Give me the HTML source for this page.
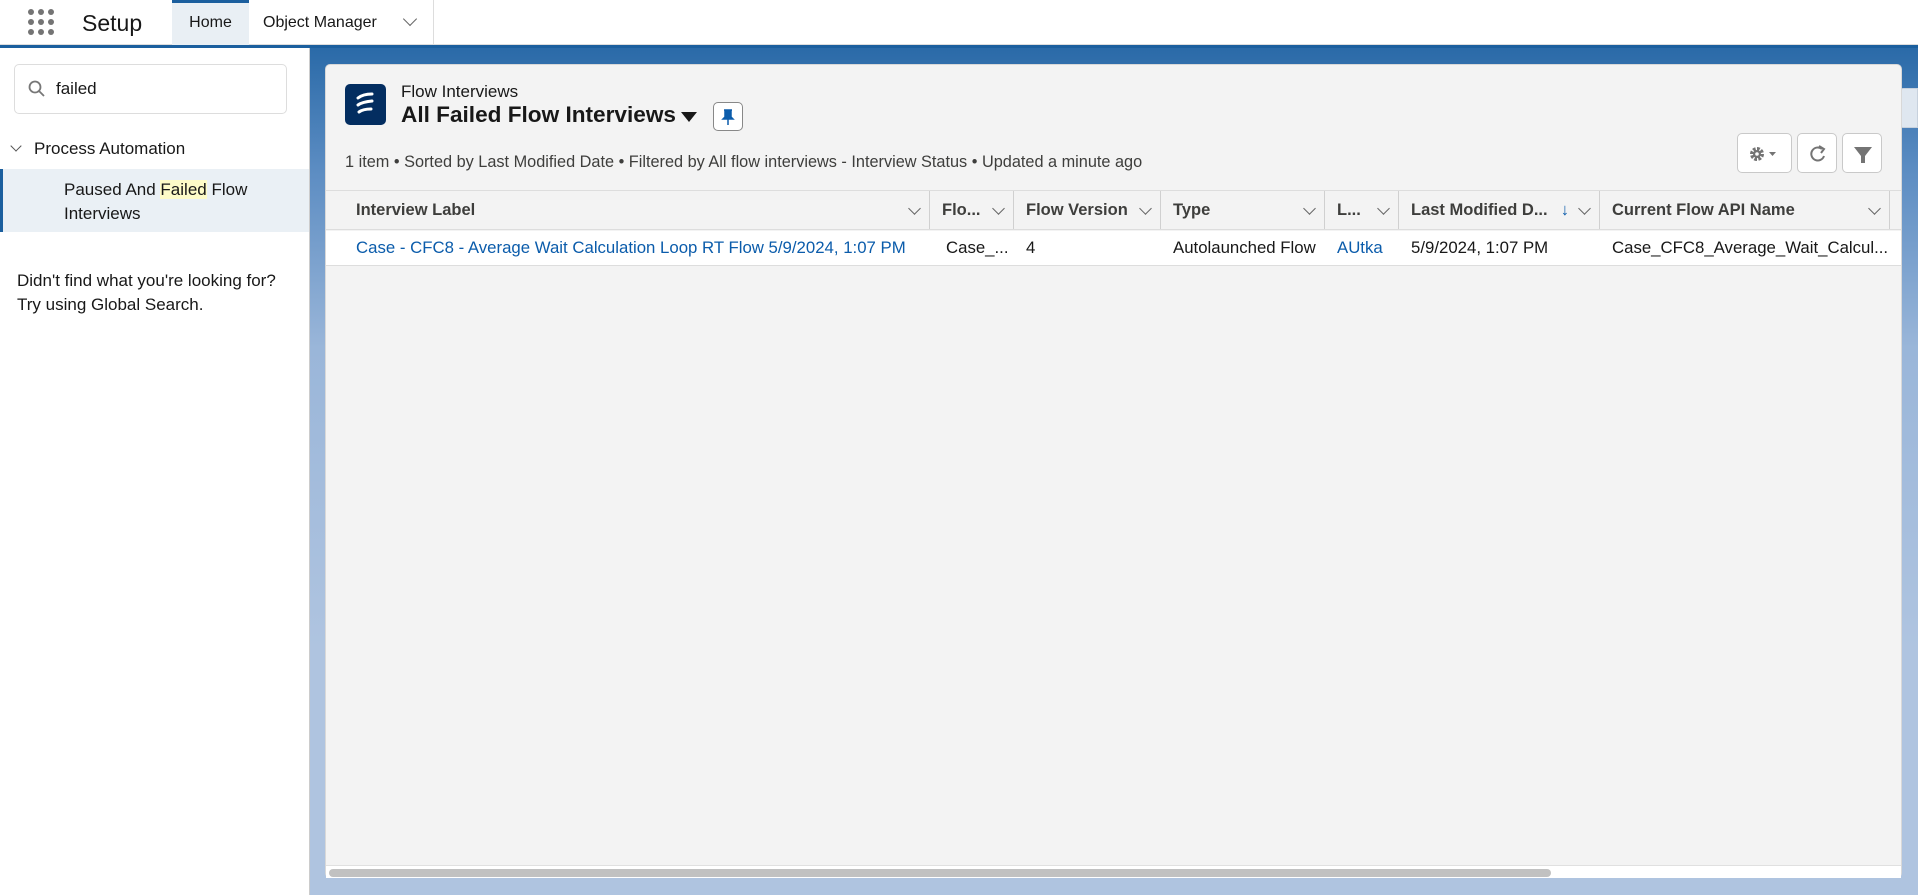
<!DOCTYPE html>
<html><head><meta charset="utf-8"><style>
*{box-sizing:border-box;margin:0;padding:0}
body{width:1918px;height:895px;overflow:hidden;font-family:"Liberation Sans",Arial,sans-serif;color:#181818;background:#fff;position:relative}
.top{position:absolute;left:0;top:0;width:1918px;height:45px;background:#fff;border-bottom:1px solid #ddd}
.blue{position:absolute;left:0;top:45px;width:1918px;height:3px;background:#1b5f9e}
.side{position:absolute;left:0;top:48px;width:310px;height:847px;background:#fff;border-right:1px solid #ccc}
.bg{position:absolute;left:310px;top:48px;width:1608px;height:847px;background:linear-gradient(#2a6aa8 0px,#5b8cc2 120px,#9ab6d9 300px,#afc4e0 600px)}
.card{position:absolute;left:325px;top:64px;width:1577px;height:814px;background:#f3f3f3;border:1px solid #d8d8d8;border-radius:5px;overflow:hidden}
.hdr{position:absolute;top:190px;left:326px;width:1575px;height:40px;background:#f3f3f3;border-top:1px solid #ddd;border-bottom:1px solid #ddd}
.row{position:absolute;top:231px;left:326px;width:1575px;height:35px;background:#fff;border-bottom:1px solid #ddd}
.c{position:absolute;top:0;height:100%;font-size:16.8px;display:flex;align-items:center;padding-left:12px;white-space:nowrap}
.hdr .c{font-weight:bold;font-size:16.5px;color:#3e3e3c;border-right:1px solid #d0d0d0}
.chev{position:absolute;right:10px;top:13px;width:9px;height:9px;border-right:1.5px solid #666;border-bottom:1.5px solid #666;transform:rotate(45deg)}
.link{color:#0b5cab}
.btn{position:absolute;top:133px;height:40px;border:1px solid #c9c9c9;border-radius:5px;background:#fff}
</style></head><body>
<div class="top">
 <svg style="position:absolute;left:27px;top:8px" width="28" height="28"><g fill="#747474"><circle cx="4" cy="4" r="3"/><circle cx="14" cy="4" r="3"/><circle cx="24" cy="4" r="3"/><circle cx="4" cy="14" r="3"/><circle cx="14" cy="14" r="3"/><circle cx="24" cy="14" r="3"/><circle cx="4" cy="24" r="3"/><circle cx="14" cy="24" r="3"/><circle cx="24" cy="24" r="3"/></g></svg>
 <div style="position:absolute;left:82px;top:10px;font-size:23px">Setup</div>
 <div style="position:absolute;left:172px;top:0;width:77px;height:45px;background:#e9eff4;border-top:3px solid #1b5f9e;font-size:16px;text-align:center;line-height:40px">Home</div>
 <div style="position:absolute;left:249px;top:0;width:185px;height:45px;border-right:1px solid #ddd;font-size:16px;line-height:45px;padding-left:14px">Object Manager<span style="position:absolute;left:156px;top:14px;width:10px;height:10px;border-right:1.5px solid #666;border-bottom:1.5px solid #666;transform:rotate(45deg)"></span></div>
</div>
<div class="blue"></div>
<div class="side">
 <div style="position:absolute;left:14px;top:16px;width:273px;height:50px;border:1px solid #ddd;border-radius:5px">
  <svg style="position:absolute;left:13px;top:15px" width="18" height="18"><circle cx="7" cy="7" r="5.5" fill="none" stroke="#777" stroke-width="1.8"/><line x1="11" y1="11" x2="16" y2="16" stroke="#777" stroke-width="1.8"/></svg>
  <span style="position:absolute;left:41px;top:14px;font-size:17px">failed</span>
 </div>
 <span style="position:absolute;left:12px;top:94px;width:8px;height:8px;border-right:1.3px solid #555;border-bottom:1.3px solid #555;transform:rotate(45deg)"></span>
 <div style="position:absolute;left:34px;top:91px;font-size:17px">Process Automation</div>
 <div style="position:absolute;left:0;top:121px;width:309px;height:63px;background:#eaf0f5;border-left:3px solid #1b5f9e"></div>
 <div style="position:absolute;left:64px;top:130px;font-size:17px;line-height:24px">Paused And <span style="background:#fdfbc8">Failed</span> Flow<br>Interviews</div>
 <div style="position:absolute;left:17px;top:221px;font-size:17px;line-height:24px">Didn't find what you're looking for?<br>Try using Global Search.</div>
</div>
<div class="bg"></div>
<div style="position:absolute;left:1898px;top:88px;width:20px;height:40px;background:#dfe7f0;border-radius:5px 0 0 5px;border:1px solid #c7d1dd"></div>
<div class="card"></div>
<div style="position:absolute;left:345px;top:84px;width:41px;height:41px;background:#032d60;border-radius:5px">
 <svg width="41" height="41"><g fill="none" stroke="#fff" stroke-width="3" stroke-linecap="round"><path d="M13 14q5-4 14-4"/><path d="M13 21q4-3 14-4"/><path d="M14 28q4-3 12-3"/></g></svg>
</div>
<div style="position:absolute;left:401px;top:82px;font-size:17px">Flow Interviews</div>
<div style="position:absolute;left:401px;top:102px;font-size:22.6px;font-weight:bold">All Failed Flow Interviews</div>
<svg style="position:absolute;left:681px;top:112px" width="16" height="10"><path d="M0 0h16L8 10z" fill="#181818"/></svg>
<div style="position:absolute;left:713px;top:102px;width:30px;height:29px;border:1px solid #888;border-radius:5px;background:#fff">
 <svg width="28" height="27"><path d="M10 7h8M11 7v7l-2 2h10l-2-2V7M14 16v6" fill="#0b5cab" stroke="#0b5cab" stroke-width="1.5"/></svg>
</div>
<div style="position:absolute;left:345px;top:153px;font-size:16.3px;color:#3e3e3c">1 item • Sorted by Last Modified Date • Filtered by All flow interviews - Interview Status • Updated a minute ago</div>
<div class="btn" style="left:1737px;width:55px"><svg width="55" height="40"><circle cx="19" cy="20" r="5" fill="none" stroke="#747474" stroke-width="4" stroke-dasharray="2.6 1.3"/><circle cx="19" cy="20" r="4" fill="#747474"/><circle cx="19" cy="20" r="1.8" fill="#fff"/><path d="M31 18h7l-3.5 4z" fill="#747474"/></svg></div>
<div class="btn" style="left:1797px;width:40px"><svg width="40" height="40"><path d="M24 15a6.5 6.5 0 1 0 2 7" fill="none" stroke="#747474" stroke-width="2"/><path d="M21 12l5 3-3 4" fill="none" stroke="#747474" stroke-width="2"/></svg></div>
<div class="btn" style="left:1842px;width:40px"><svg width="40" height="40"><path d="M11 13h18l-7 9v7h-4v-7z" fill="#747474"/></svg></div>
<div class="hdr">
 <div class="c" style="left:0;width:604px;padding-left:30px">Interview Label<span class="chev"></span></div>
 <div class="c" style="left:604px;width:84px">Flo...<span class="chev"></span></div>
 <div class="c" style="left:688px;width:147px">Flow Version<span class="chev"></span></div>
 <div class="c" style="left:835px;width:164px">Type<span class="chev"></span></div>
 <div class="c" style="left:999px;width:74px">L...<span class="chev"></span></div>
 <div class="c" style="left:1073px;width:201px">Last Modified D...<span style="position:absolute;right:30px;color:#0b5cab;font-weight:normal">↓</span><span class="chev"></span></div>
 <div class="c" style="left:1274px;width:290px">Current Flow API Name<span class="chev"></span></div>
</div>
<div class="row">
 <div class="c link" style="left:0;padding-left:30px">Case - CFC8 - Average Wait Calculation Loop RT Flow 5/9/2024, 1:07 PM</div>
 <div class="c" style="left:604px;padding-left:16px">Case_...</div>
 <div class="c" style="left:688px">4</div>
 <div class="c" style="left:835px">Autolaunched Flow</div>
 <div class="c link" style="left:999px">AUtka</div>
 <div class="c" style="left:1073px">5/9/2024, 1:07 PM</div>
 <div class="c" style="left:1274px">Case_CFC8_Average_Wait_Calcul...</div>
</div>
<div style="position:absolute;left:326px;top:865px;width:1575px;height:13px;background:#fff;border-top:1px solid #e0e0e0"></div>
<div style="position:absolute;left:329px;top:869px;width:1222px;height:8px;background:#c1c1c1;border-radius:4px"></div>
</body></html>
